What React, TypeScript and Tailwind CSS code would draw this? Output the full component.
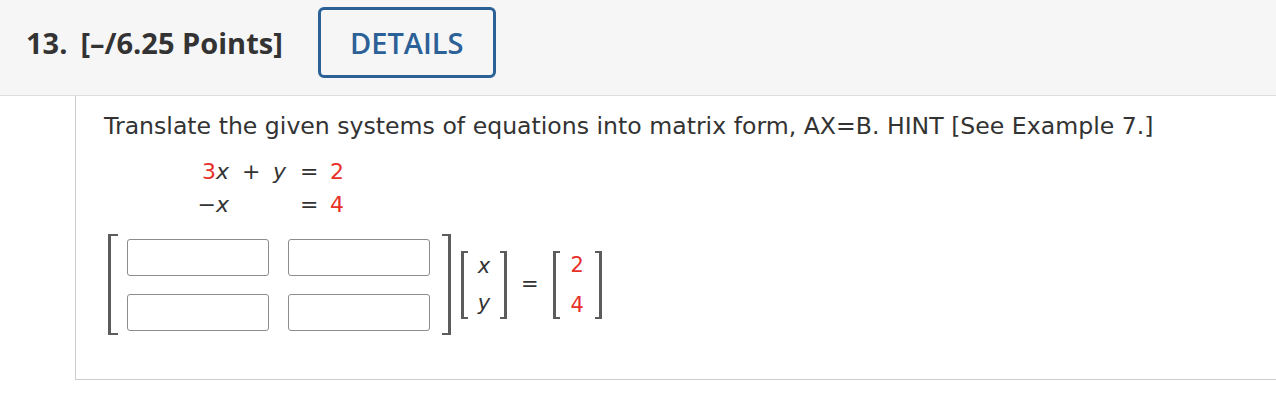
import React from "react";

function Bracket({ side, h, w }: { side: "l" | "r"; h: string; w: string }) {
  return (
    <div
      className={`${h} ${w} border-[#5c5c5c] border-y-2 ${
        side === "l" ? "border-l-[3px]" : "border-r-[3px]"
      }`}
    />
  );
}

function Box() {
  return <div className="h-[37px] w-[142px] rounded-[3px] border border-[#8c8c8c] bg-white" />;
}

export default function App() {
  return (
    <div className="w-full bg-white text-[#333333]" style={{ fontFamily: "'DejaVu Sans', Verdana, sans-serif" }}>
      <div className="flex h-[96px] items-center border-b border-[#dddddd] bg-[#f6f6f6] pb-[10px] pl-[26px]">
        <div className="flex items-center text-[29px] font-bold text-[#333333]" style={{ fontFamily: "'Open Sans', sans-serif" }}>
          <span>13.</span>
          <span className="ml-[13px]">[–/6.25 Points]</span>
        </div>
        <div
          className="ml-[35px] flex h-[71px] w-[178px] items-center justify-center rounded-[6px] border-[3px] border-[#2b6196] text-[29px] font-semibold text-[#2b6196]"
          style={{ fontFamily: "'Open Sans', sans-serif" }}
        >
          DETAILS
        </div>
      </div>
      <div className="ml-[75px] h-[284px] border-b border-l border-[#cccccc] pl-[28px] pt-[14px]">
        <p className="text-[23.6px] leading-[32px]">
          Translate the given systems of equations into matrix form, AX=B. HINT [See Example 7.]
        </p>
        <div className="ml-[88px] mt-[13px] grid grid-cols-[37px_44px_27px_30px_26px] text-[22px] leading-[33px]">
          <div className="text-right">
            <span className="text-[#e8302a]">3</span>
            <i>x</i>
          </div>
          <div className="pl-[13px]">+</div>
          <div><i>y</i></div>
          <div>=</div>
          <div className="text-[#e8302a]">2</div>
          <div className="text-right">
            −<i>x</i>
          </div>
          <div />
          <div />
          <div>=</div>
          <div className="text-[#e8302a]">4</div>
        </div>
        <div className="ml-[4px] mt-[13px] flex items-center">
          <Bracket side="l" h="h-[101px]" w="w-[10px]" />
          <div className="ml-[9px] grid grid-cols-[142px_142px] gap-x-[19px] gap-y-[18px]">
            <Box />
            <Box />
            <Box />
            <Box />
          </div>
          <div className="ml-[12px]">
            <Bracket side="r" h="h-[101px]" w="w-[9px]" />
          </div>
          <div className="ml-[10px]">
            <Bracket side="l" h="h-[68px]" w="w-[7px]" />
          </div>
          <div className="flex w-[32px] flex-col items-center text-[21px] leading-[37px]">
            <i>x</i>
            <i>y</i>
          </div>
          <Bracket side="r" h="h-[68px]" w="w-[7px]" />
          <div className="mx-[14px] text-[21px]">=</div>
          <Bracket side="l" h="h-[68px]" w="w-[7px]" />
          <div className="flex w-[35px] flex-col items-center text-[21px] leading-[40px] text-[#e8302a]">
            <span>2</span>
            <span>4</span>
          </div>
          <Bracket side="r" h="h-[68px]" w="w-[7px]" />
        </div>
      </div>
    </div>
  );
}
